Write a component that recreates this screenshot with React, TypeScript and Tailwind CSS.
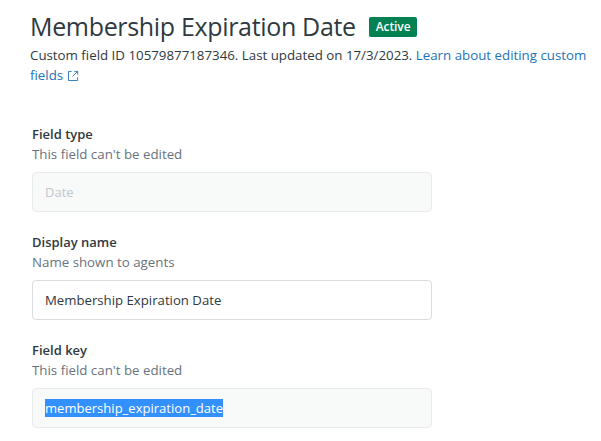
import React from 'react';

const font = { fontFamily: '"Open Sans", sans-serif' };

function ExternalIcon() {
  return (
    <svg viewBox="0 0 12 12" className="inline-block w-[11px] h-[11px] ml-[5px] align-[-1px]" fill="none" stroke="currentColor" strokeWidth="1">
      <path d="M4 1.5H.5v10h10V8" />
      <path d="M7 1.5h3.5V5M10.5 1.5 5 7" />
    </svg>
  );
}

export default function App() {
  return (
    <div className="w-[601px] h-[441px] overflow-hidden bg-white text-[#2f3941] pt-[9px]" style={font}>
      <div className="pl-[30px]">
        <div className="flex items-center h-[34px]">
          <h1 className="text-[25px] leading-[34px] font-normal tracking-[-0.33px]">Membership Expiration Date</h1>
          <span className="ml-[13px] mt-[2px] h-5 px-[7px] rounded-[2px] bg-[#038153] text-white text-xs font-semibold leading-5 tracking-[-0.1px]">Active</span>
        </div>
        <p className="mt-[2px] pr-3 text-[13.3px] leading-5">
          Custom field ID 10579877187346. Last updated on 17/3/2023.{' '}
          <a className="text-[#1f73b7]">Learn about editing custom</a>{' '}
          <a className="text-[#1f73b7]">fields<ExternalIcon /></a>
        </p>
      </div>

      <div className="pl-8 mt-[39px] w-[432px] flex flex-col gap-5">
        <div>
          <div className="text-[13px] leading-5 font-semibold">Field type</div>
          <div className="text-[13.3px] leading-5 text-[#68737d]">This field can't be edited</div>
          <div className="mt-2 h-10 px-3 pt-[2px] flex items-center bg-[#f8f9f9] border border-[#e9ebed] rounded text-[13px] text-[#c2c8cc]">Date</div>
        </div>
        <div>
          <div className="text-[13px] leading-5 font-semibold">Display name</div>
          <div className="text-[13.3px] leading-5 text-[#68737d]">Name shown to agents</div>
          <div className="mt-2 h-10 px-3 pt-[2px] flex items-center bg-white border border-[#d8dcde] rounded text-[13.2px]">Membership Expiration Date</div>
        </div>
        <div>
          <div className="text-[13px] leading-5 font-semibold">Field key</div>
          <div className="text-[13.3px] leading-5 text-[#68737d]">This field can't be edited</div>
          <div className="mt-2 h-10 px-3 flex items-center bg-[#f8f9f9] border border-[#e9ebed] rounded text-[13.05px]">
            <span className="bg-[#3390ff] text-white leading-[18px]">membership_expiration_date</span>
          </div>
        </div>
      </div>
    </div>
  );
}
